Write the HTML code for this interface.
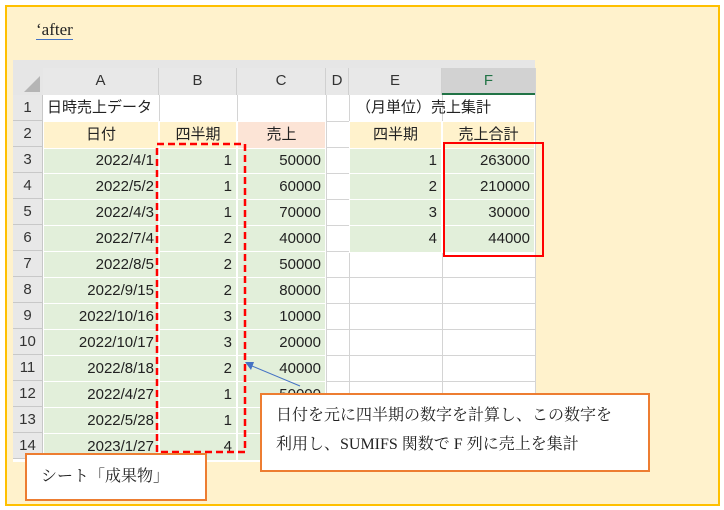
<!DOCTYPE html><html><head><meta charset="utf-8"><style>
body{margin:0;width:724px;height:510px;background:#fff;position:relative;overflow:hidden;font-family:"Liberation Sans","Noto Sans CJK JP",sans-serif}
.frame{position:absolute;left:5px;top:5px;width:711px;height:497px;border:2px solid #ffc000;background:#fff2cc}
.abs{position:absolute}
.c{position:absolute;box-sizing:border-box;font-size:15px;color:#222;line-height:26px;padding:0 4px;white-space:nowrap;overflow:hidden}
.g{background:#e2efda;border:1px solid #fff}
.h{background:#e8e8e8;color:#333;text-align:center;font-size:15px}
.box{position:absolute;background:#fff;border:2px solid #ed7d31;box-sizing:border-box;font-family:"Liberation Serif","Noto Serif CJK SC",serif;color:#222}
</style></head><body>
<div class="frame"></div>
<div class="abs" style="left:36px;top:21px;font-family:'Liberation Serif',serif;font-size:17px;color:#222;border-bottom:1px solid #4472c4;line-height:18px">‘after</div>
<div class="abs" style="left:13px;top:60px;width:522px;height:402px;background:#fff"></div>
<div class="abs" style="left:13px;top:60px;width:522px;height:8px;background:#e6e6e6"></div>
<svg class="abs" style="left:0;top:0" width="724" height="510">
<g stroke="#d4d4d4" stroke-width="1">
<line x1="326.5" y1="95" x2="326.5" y2="462"/><line x1="349.5" y1="95" x2="349.5" y2="462"/><line x1="442.5" y1="95" x2="442.5" y2="462"/><line x1="535.5" y1="68" x2="535.5" y2="462"/>
<line x1="159.5" y1="95" x2="159.5" y2="121"/><line x1="237.5" y1="95" x2="237.5" y2="121"/>
</g>
<g stroke="#d4d4d4">
<line x1="326" y1="121.5" x2="535" y2="121.5"/><line x1="326" y1="147.5" x2="535" y2="147.5"/><line x1="326" y1="173.5" x2="535" y2="173.5"/><line x1="326" y1="199.5" x2="535" y2="199.5"/><line x1="326" y1="225.5" x2="535" y2="225.5"/><line x1="326" y1="251.5" x2="535" y2="251.5"/><line x1="326" y1="277.5" x2="535" y2="277.5"/><line x1="326" y1="303.5" x2="535" y2="303.5"/><line x1="326" y1="329.5" x2="535" y2="329.5"/><line x1="326" y1="355.5" x2="535" y2="355.5"/><line x1="326" y1="381.5" x2="535" y2="381.5"/>
</g>
</svg>
<div class="c h" style="left:13px;top:68px;width:30px;height:27px;background:#e6e6e6"></div>
<svg class="abs" style="left:22px;top:74px" width="20" height="20"><polygon points="18,2 18,18 2,18" fill="#b5b5b5"/></svg>
<div class="c h" style="left:43px;top:68px;width:116px;height:27px;border-right:1px solid #d0d0d0">A</div>
<div class="c h" style="left:159px;top:68px;width:78px;height:27px;border-right:1px solid #d0d0d0">B</div>
<div class="c h" style="left:237px;top:68px;width:89px;height:27px;border-right:1px solid #d0d0d0">C</div>
<div class="c h" style="left:326px;top:68px;width:23px;height:27px;border-right:1px solid #d0d0d0">D</div>
<div class="c h" style="left:349px;top:68px;width:93px;height:27px;border-right:1px solid #d0d0d0">E</div>
<div class="c h" style="left:442px;top:68px;width:93px;height:27px;background:#d2d2d2;border-bottom:2px solid #217346;color:#217346">F</div>
<div id="rows"></div>
<div class="c" style="left:43px;top:95px;width:120px">日時売上データ</div>
<div class="c" style="left:352px;top:95px;width:183px">（月単位）売上集計</div>
<div class="c" style="left:43px;top:121px;width:116px;background:#fff2cc;border:1px solid #fff;text-align:center">日付</div>
<div class="c" style="left:159px;top:121px;width:78px;background:#fff2cc;border:1px solid #fff;text-align:center">四半期</div>
<div class="c" style="left:237px;top:121px;width:89px;background:#fce4d6;border:1px solid #fff;text-align:center">売上</div>
<div class="c" style="left:349px;top:121px;width:93px;background:#fff2cc;border:1px solid #fff;text-align:center">四半期</div>
<div class="c" style="left:442px;top:121px;width:93px;background:#fff2cc;border:1px solid #fff;text-align:center">売上合計</div>
<script>
var d=[["2022/4/1",1,50000],["2022/5/2",1,60000],["2022/4/3",1,70000],["2022/7/4",2,40000],["2022/8/5",2,50000],["2022/9/15",2,80000],["2022/10/16",3,10000],["2022/10/17",3,20000],["2022/8/18",2,40000],["2022/4/27",1,50000],["2022/5/28",1,60000],["2023/1/27",4,70000]];
var s="";
for(var i=1;i<=14;i++){var t=95+(i-1)*26;s+='<div class="c h" style="left:13px;top:'+t+'px;width:30px;height:26px;border-bottom:1px solid #c8c8c8;border-right:1px solid #c8c8c8">'+i+'</div>';}
for(var i=0;i<12;i++){var t=147+i*26;s+='<div class="c g" style="left:43px;top:'+t+'px;width:116px;text-align:right">'+d[i][0]+'</div><div class="c g" style="left:159px;top:'+t+'px;width:78px;text-align:right">'+d[i][1]+'</div><div class="c g" style="left:237px;top:'+t+'px;width:89px;text-align:right">'+d[i][2]+'</div>';}
var f=[263000,210000,30000,44000];
for(var i=0;i<4;i++){var t=147+i*26;s+='<div class="c g" style="left:349px;top:'+t+'px;width:93px;text-align:right">'+(i+1)+'</div><div class="c g" style="left:442px;top:'+t+'px;width:93px;text-align:right">'+f[i]+'</div>';}
document.getElementById("rows").innerHTML=s;
</script>
<svg class="abs" style="left:0;top:0" width="724" height="510">
<rect x="157" y="144" width="88" height="308" fill="none" stroke="#f00" stroke-width="2.5" stroke-dasharray="7,4"/>
<rect x="444" y="143" width="99" height="113" fill="none" stroke="#f00" stroke-width="2"/>
<line x1="300" y1="386" x2="252" y2="366" stroke="#4472c4" stroke-width="1"/>
<polygon points="245,362 254,362 251,370" fill="#4472c4"/>
</svg>
<div class="box" style="left:260px;top:393px;width:390px;height:79px;padding:6px 0 0 14px;font-size:16px;line-height:29px">日付を元に四半期の数字を計算し、この数字を<br>利用し、SUMIFS 関数で F 列に売上を集計</div>
<div class="box" style="left:25px;top:453px;width:182px;height:48px;padding:0 0 0 14px;font-size:16px;line-height:44px">シート「成果物」</div>
</body></html>
